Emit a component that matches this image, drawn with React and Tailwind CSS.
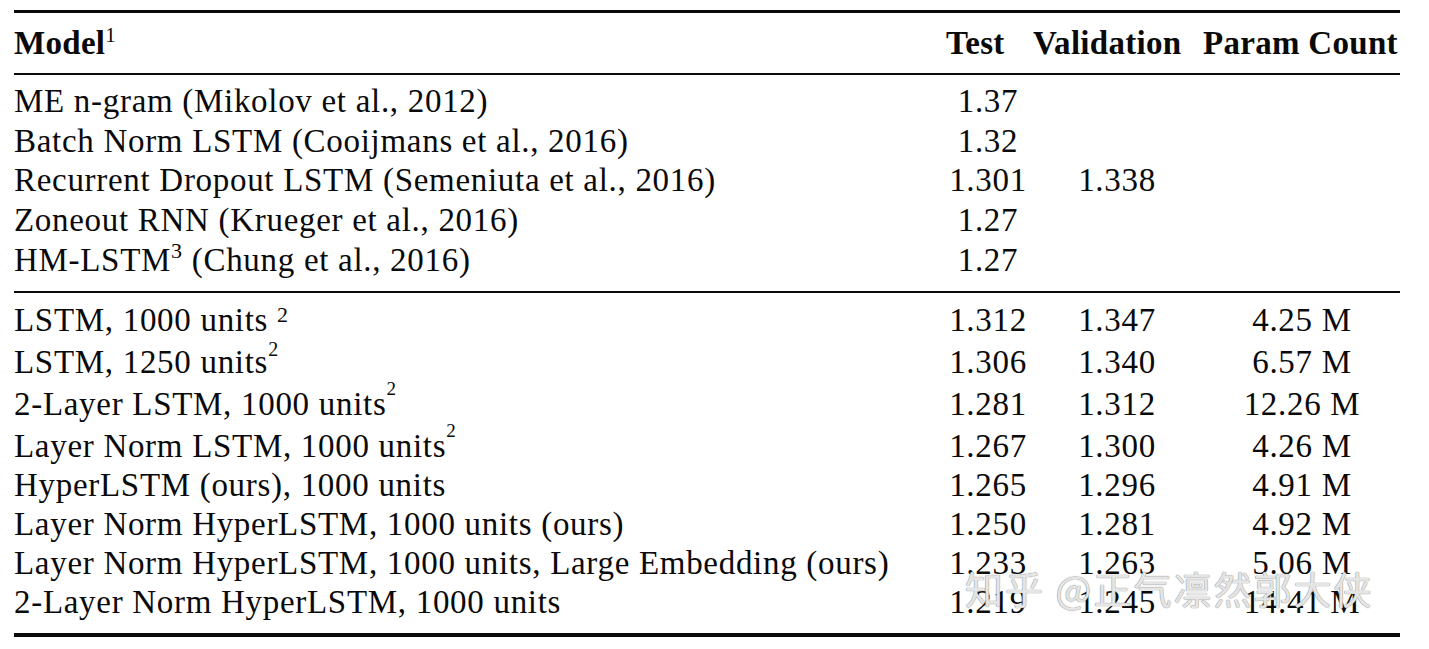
import React from "react";

const Sup = ({ children, className }) => (
  <sup className={`relative ${className}`}>{children}</sup>
);

const upper = [
  { name: "ME n-gram (Mikolov et al., 2012)", test: "1.37", h: "h-[40px]" },
  { name: "Batch Norm LSTM (Cooijmans et al., 2016)", test: "1.32", h: "h-[39px]" },
  {
    name: "Recurrent Dropout LSTM (Semeniuta et al., 2016)",
    test: "1.301",
    val: "1.338",
    h: "h-[40px]",
  },
  { name: "Zoneout RNN (Krueger et al., 2016)", test: "1.27", h: "h-[40px]" },
  {
    name: (
      <>
        HM-LSTM<Sup className="text-[22px] -top-[13px]">3</Sup> (Chung et al., 2016)
      </>
    ),
    test: "1.27",
    h: "h-[40px]",
  },
];

const lower = [
  {
    name: (
      <>
        LSTM, 1000 units <Sup className="text-[22px] -top-[9px]">2</Sup>
      </>
    ),
    test: "1.312",
    val: "1.347",
    param: "4.25 M",
    h: "h-[42px] pt-[3px]",
  },
  {
    name: (
      <>
        LSTM, 1250 units<Sup className="text-[20px] -top-[17px]">2</Sup>
      </>
    ),
    test: "1.306",
    val: "1.340",
    param: "6.57 M",
    h: "h-[42px] pt-[3px]",
  },
  {
    name: (
      <>
        2-Layer LSTM, 1000 units<Sup className="text-[19px] -top-[20px]">2</Sup>
      </>
    ),
    test: "1.281",
    val: "1.312",
    param: "12.26 M",
    h: "h-[42px] pt-[3px]",
  },
  {
    name: (
      <>
        Layer Norm LSTM, 1000 units<Sup className="text-[19px] -top-[20px]">2</Sup>
      </>
    ),
    test: "1.267",
    val: "1.300",
    param: "4.26 M",
    h: "h-[42px] pt-[3px]",
  },
  { name: "HyperLSTM (ours), 1000 units", test: "1.265", val: "1.296", param: "4.91 M", h: "h-[39px]" },
  {
    name: "Layer Norm HyperLSTM, 1000 units (ours)",
    test: "1.250",
    val: "1.281",
    param: "4.92 M",
    h: "h-[39px]",
  },
  {
    name: "Layer Norm HyperLSTM, 1000 units, Large Embedding (ours)",
    test: "1.233",
    val: "1.263",
    param: "5.06 M",
    h: "h-[39px]",
  },
  {
    name: "2-Layer Norm HyperLSTM, 1000 units",
    test: "1.219",
    val: "1.245",
    param: "14.41 M",
    h: "h-[39px]",
  },
];

const Row = ({ row }) => (
  <div className={`flex leading-[39px] whitespace-nowrap ${row.h}`}>
    <div className="w-[932px]">{row.name}</div>
    <div className="w-[84px] text-center">{row.test}</div>
    <div className="w-[174px] text-center">{row.val}</div>
    <div className="w-[196px] text-center">{row.param}</div>
  </div>
);

export default function App() {
  return (
    <div className="relative h-[649px] w-[1429px] overflow-hidden bg-white text-[#0a0a0a]">
      <div className="ml-[14px] w-[1386px] font-['Liberation_Serif','Times_New_Roman',serif] text-[33px] tracking-[0.7px]">
        {/* top rule */}
        <div className="mt-[10px] h-[3px] bg-[#0a0a0a]" />

        {/* header */}
        <div className="mt-[11px] flex h-[39px] font-bold leading-[39px] tracking-[0.3px] whitespace-nowrap">
          <div className="w-[932px]">
            Model<Sup className="text-[21px] font-normal -top-[12px]">1</Sup>
          </div>
          <div className="w-[84px]">Test</div>
          <div className="w-[174px] pl-[3px]">Validation</div>
          <div className="w-[196px] -ml-[1px]">Param Count</div>
        </div>

        <div className="mt-[10px] h-[2px] bg-[#0a0a0a]" />

        <div className="mt-[7px]">
          {upper.map((r, i) => (
            <Row key={i} row={r} />
          ))}
        </div>

        <div className="mt-[10px] h-[2px] bg-[#0a0a0a]" />

        <div className="mt-[5px]">
          {lower.map((r, i) => (
            <Row key={i} row={r} />
          ))}
        </div>

        {/* bottom rule */}
        <div className="mt-[11px] h-[4px] bg-[#0a0a0a]" />
      </div>

      {/* watermark */}
      <div className="absolute left-[965px] top-[569px] whitespace-nowrap font-['Noto_Sans_CJK_SC',sans-serif] text-[38px] leading-none tracking-[2px] text-[#f2f2f2]/90 [text-shadow:0_0_1px_#8a8a8a,0_0_1px_#8a8a8a]">
        知乎 @正气凛然郭大侠
      </div>
    </div>
  );
}
